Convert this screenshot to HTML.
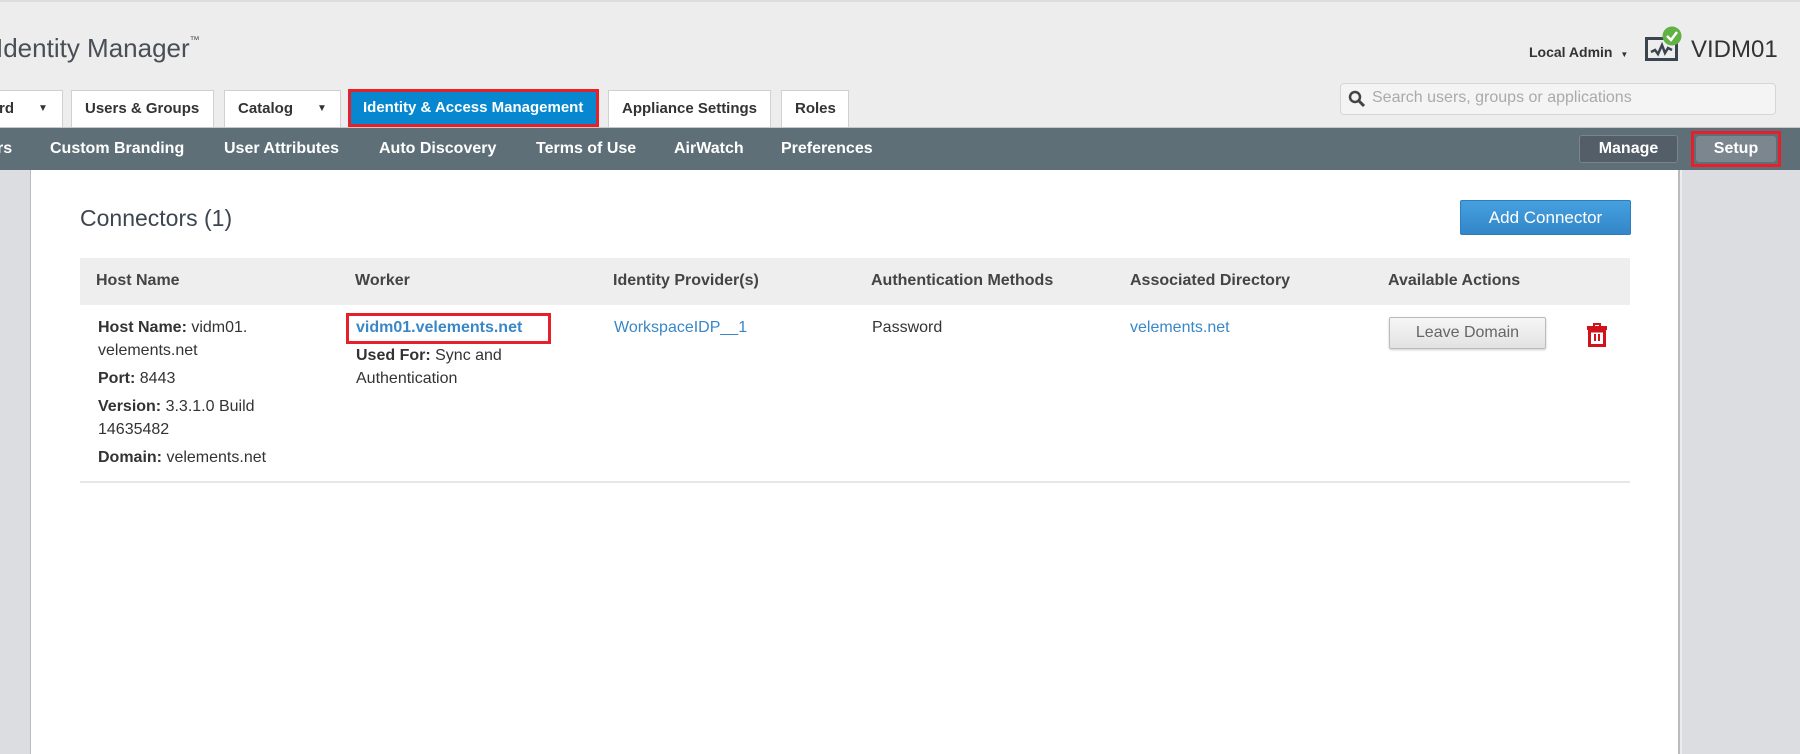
<!DOCTYPE html>
<html><head><meta charset="utf-8"><style>
*{margin:0;padding:0;box-sizing:border-box}
body{width:1800px;height:754px;overflow:hidden;background:#ededed;font-family:"Liberation Sans",sans-serif;position:relative;color:#333}
.a{position:absolute;white-space:nowrap}
.tab{position:absolute;top:90px;height:37px;background:#fff;border:1px solid #d0d0d0;border-bottom:none;font-size:15px;font-weight:bold;color:#333;line-height:36px;padding-left:13px}
.sub{position:absolute;top:140px;color:#fff;font-weight:bold;font-size:16px}
.th{position:absolute;top:272px;font-weight:bold;font-size:16px;color:#444}
.td{position:absolute;font-size:16px;line-height:23px;color:#333}
a{color:#3a87c8;text-decoration:none}
</style></head><body>
<div class="a" style="left:0;top:0;width:1800px;height:2px;background:#ddd"></div>
<div class="a" style="left:-4px;top:33px;font-size:26px;color:#4a4f55">Identity Manager<sup style="font-size:10px;vertical-align:14px">™</sup></div>
<div class="a" style="left:1529px;top:44px;font-size:14px;font-weight:bold;color:#333">Local Admin <span style="font-size:8px;margin-left:4px">▼</span></div>
<svg class="a" style="left:1645px;top:26px" width="40" height="36" viewBox="0 0 40 36"><rect x="1.5" y="12.5" width="30" height="21" fill="none" stroke="#3a4550" stroke-width="3"/><path d="M6 26 L10 24 L13 28 L17 19 L20 27 L23 22 L27 24" fill="none" stroke="#3a4550" stroke-width="2.5"/><circle cx="27" cy="10" r="9.5" fill="#62b145"/><path d="M22 10 L26 14 L32 6" fill="none" stroke="#fff" stroke-width="2.5"/></svg>
<div class="a" style="left:1691px;top:36px;font-size:24px;color:#333">VIDM01</div>
<div class="a" style="left:1340px;top:83px;width:436px;height:32px;background:#f4f4f4;border:1px solid #d6d6d6;border-radius:4px"></div>
<svg class="a" style="left:1348px;top:90px" width="18" height="18" viewBox="0 0 18 18"><circle cx="7" cy="7" r="5" fill="none" stroke="#444" stroke-width="2.5"/><path d="M10.5 10.5 L16 16" stroke="#444" stroke-width="3"/></svg>
<div class="a" style="left:1372px;top:89px;font-size:16px;color:#aaa">Search users, groups or applications</div>

<div class="tab" style="left:-2px;width:65px;padding-left:0">rd<span style="position:absolute;left:39px;font-size:10px">▼</span></div>
<div class="tab" style="left:71px;width:143px">Users &amp; Groups</div>
<div class="tab" style="left:224px;width:117px">Catalog<span style="position:absolute;left:92px;font-size:10px">▼</span></div>
<div class="tab" style="left:348px;width:251px;height:38px;top:89px;background:#0687cf;color:#fff;border:3px solid #e5202a;line-height:32px;padding-left:12px">Identity &amp; Access Management</div>
<div class="tab" style="left:608px;width:163px">Appliance Settings</div>
<div class="tab" style="left:781px;width:68px">Roles</div>

<div class="a" style="left:0;top:127px;width:1800px;height:43px;background:#5e6f77;border-top:1px solid #c8c8c8"></div>
<div class="sub" style="left:-3px">rs</div>
<div class="sub" style="left:50px">Custom Branding</div>
<div class="sub" style="left:224px">User Attributes</div>
<div class="sub" style="left:379px">Auto Discovery</div>
<div class="sub" style="left:536px">Terms of Use</div>
<div class="sub" style="left:674px">AirWatch</div>
<div class="sub" style="left:781px">Preferences</div>
<div class="a" style="left:1579px;top:135px;width:99px;height:28px;background:#535e69;border:1px solid #7a848c;border-radius:3px;color:#fff;font-weight:bold;font-size:16px;text-align:center;line-height:26px">Manage</div>
<div class="a" style="left:1691px;top:131px;width:90px;height:36px;border:3px solid #e5202a;background:#5e6f77;padding:2px"><div style="background:#7b868e;height:26px;border-radius:3px;color:#fff;font-weight:bold;font-size:16px;text-align:center;line-height:26px">Setup</div></div>

<div class="a" style="left:0;top:170px;width:30px;height:584px;background:#dcdde0"></div>
<div class="a" style="left:30px;top:170px;width:1650px;height:584px;background:#fff;border-left:1px solid #bbb;border-right:2px solid #bbb"></div>
<div class="a" style="left:1682px;top:170px;width:118px;height:584px;background:#dcdde0"></div>

<div class="a" style="left:80px;top:205px;font-size:23px;color:#3d4650">Connectors (1)</div>
<div class="a" style="left:1460px;top:200px;width:171px;height:35px;background:linear-gradient(#45a0e0,#3386c8);border:1px solid #2f7dbd;border-radius:2px;color:#fff;font-size:17px;text-align:center;line-height:33px">Add Connector</div>

<div class="a" style="left:80px;top:258px;width:1550px;height:47px;background:#eee"></div>
<div class="th" style="left:96px">Host Name</div>
<div class="th" style="left:355px">Worker</div>
<div class="th" style="left:613px">Identity Provider(s)</div>
<div class="th" style="left:871px">Authentication Methods</div>
<div class="th" style="left:1130px">Associated Directory</div>
<div class="th" style="left:1388px">Available Actions</div>

<div class="td" style="left:98px;top:316px"><b>Host Name:</b> vidm01.<br>velements.net</div>
<div class="td" style="left:98px;top:367px"><b>Port:</b> 8443</div>
<div class="td" style="left:98px;top:395px"><b>Version:</b> 3.3.1.0 Build<br>14635482</div>
<div class="td" style="left:98px;top:446px"><b>Domain:</b> velements.net</div>

<div class="a" style="left:346px;top:313px;width:205px;height:31px;border:3px solid #e5202a"></div>
<div class="td" style="left:356px;top:316px;font-weight:bold;color:#3a87c8">vidm01.velements.net</div>
<div class="td" style="left:356px;top:344px"><b>Used For:</b> Sync and<br>Authentication</div>
<div class="td" style="left:614px;top:316px"><a>WorkspaceIDP__1</a></div>
<div class="td" style="left:872px;top:316px">Password</div>
<div class="td" style="left:1130px;top:316px"><a>velements.net</a></div>
<div class="a" style="left:1389px;top:317px;width:157px;height:32px;background:linear-gradient(#f6f6f6,#e2e2e2);border:1px solid #bbb;border-radius:2px;box-shadow:0 1px 2px rgba(0,0,0,.2);color:#666;font-size:16px;text-align:center;line-height:30px">Leave Domain</div>
<svg class="a" style="left:1587px;top:323px" width="20" height="24" viewBox="0 0 20 24"><path d="M7 3 V1 H13 V3" fill="none" stroke="#d0121b" stroke-width="2"/><rect x="0" y="3" width="20" height="4" fill="#d0121b"/><rect x="2.5" y="8" width="15" height="14.5" fill="none" stroke="#d0121b" stroke-width="3"/><rect x="7" y="11" width="2" height="7" fill="#d0121b"/><rect x="11" y="11" width="2" height="7" fill="#d0121b"/></svg>
<div class="a" style="left:80px;top:481px;width:1550px;height:2px;background:#e6e6e6"></div>
</body></html>
